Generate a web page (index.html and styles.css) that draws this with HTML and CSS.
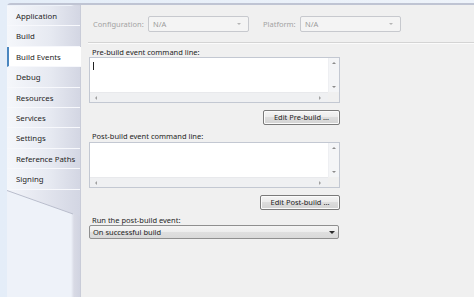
FILE: index.html
```html
<!DOCTYPE html>
<html lang="en">
<head>
    <meta charset="UTF-8">
    <title>Build Events</title>
    <link rel="stylesheet" href="styles.css">
</head>
<body>
    <div class="frame">
        <!-- Sol sekmeler -->
        <div class="sidebar">
            <div class="tab">Application</div>
            <div class="tab">Build</div>
            <div class="tab active">Build Events</div>
            <div class="tab">Debug</div>
            <div class="tab">Resources</div>
            <div class="tab">Services</div>
            <div class="tab">Settings</div>
            <div class="tab">Reference Paths</div>
            <div class="tab">Signing</div>
            <svg class="tail" width="73" height="26" viewBox="0 0 73 26">
                <defs>
                    <linearGradient id="tg" x1="0" x2="1" y1="0" y2="0">
                        <stop offset="0" stop-color="#f3f5fa"/>
                        <stop offset="1" stop-color="#d3d6e3"/>
                    </linearGradient>
                </defs>
                <polygon points="0,0 73,0 73,26 66,24" fill="url(#tg)"/>
                <line x1="0" y1="0.5" x2="66" y2="24" stroke="#b9bdcc" stroke-width="1"/>
            </svg>
        </div>

        <!-- Sayfa içeriği -->
        <div class="page">
            <div class="config-row">
                <span class="muted config-label">Configuration:</span>
                <div class="combo disabled">N/A<span class="arrow"></span></div>
                <span class="muted platform-label">Platform:</span>
                <div class="combo disabled">N/A<span class="arrow"></span></div>
            </div>
            <div class="sep"></div>

            <div class="section">
                <div class="label first">Pre-build event command line:</div>
                <div class="textbox">
                    <div class="text"><span class="caret"></span></div>
                    <div class="vscroll"><span class="up"></span><span class="down"></span></div>
                    <div class="hscroll"><span class="left"></span><span class="right"></span></div>
                    <div class="corner"></div>
                </div>
                <div class="btn-row"><div class="btn pre">Edit Pre-build ...</div></div>

                <div class="label">Post-build event command line:</div>
                <div class="textbox post">
                    <div class="text"></div>
                    <div class="vscroll"><span class="up"></span><span class="down"></span></div>
                    <div class="hscroll"><span class="left"></span><span class="right"></span></div>
                    <div class="corner"></div>
                </div>
                <div class="btn-row"><div class="btn post-btn">Edit Post-build ...</div></div>

                <div class="label run">Run the post-build event:</div>
                <div class="combo select">On successful build<span class="arrow dark"></span></div>
            </div>
        </div>
    </div>
</body>
</html>
```

FILE: styles.css
```css
* {
    margin: 0;
    padding: 0;
    box-sizing: border-box;
}

body {
    width: 474px;
    height: 297px;
    overflow: hidden;
    background: linear-gradient(to right, #e4edf8, #eef3fa);
    font-family: 'Noto Sans', 'Open Sans', sans-serif;
    font-size: 7.5px;
    color: #1e1e1e;
}

.frame {
    display: flex;
    margin: 3px 0 0 7px;
    height: 294px;
    border-top: 2px solid #bfc4d3;
    border-top-left-radius: 4px;
}

/* Sekmeler */
.sidebar {
    width: 73px;
    display: flex;
    flex-direction: column;
    padding-top: 1px;
    background: linear-gradient(to right, #eef2f9 0, #eef2f9 64px, #d8dae5 67px, #d1d4e1 73px);
}

.tab {
    height: 20.4px;
    line-height: 20px;
    padding-left: 9px;
    font-size: 7.8px;
    background: linear-gradient(to right, #f5f7fb, #e6e9f1 60%, #d3d6e3);
    border-bottom: 1px solid #f7f8fc;
    white-space: nowrap;
}

.tab.active {
    background: #ffffff;
    border-left: 2px solid #4a86bf;
    padding-left: 7px;
    margin-right: -1px;
    position: relative;
}

.tail {
    display: block;
}

/* İçerik */
.page {
    flex: 1;
    background: #f0f0f0;
    border-left: 1px solid #c9ccd8;
}

.config-row {
    display: flex;
    align-items: center;
    height: 37px;
    padding-left: 12px;
}

.muted {
    color: #a3a3a3;
}

.config-label {
    width: 55px;
}

.platform-label {
    width: 37px;
    margin-left: 14px;
}

.combo {
    position: relative;
    width: 101px;
    height: 16px;
    line-height: 14px;
    padding-left: 4px;
    border: 1px solid #c7c9ce;
    border-radius: 2px;
    background: #f4f4f4;
}

.combo.disabled {
    color: #9b9b9b;
}

.arrow {
    position: absolute;
    right: 7px;
    top: 6px;
    border-left: 2px solid transparent;
    border-right: 2px solid transparent;
    border-top: 2px solid #b5b5b5;
}

.arrow.dark {
    border-left-width: 3px;
    border-right-width: 3px;
    border-top: 3px solid #2a2a2a;
    right: 3px;
    top: 5px;
}

.sep {
    margin-left: 7px;
    border-top: 1px solid #d4d4d4;
    border-bottom: 1px solid #fbfbfb;
}

.section {
    padding-left: 8px;
    width: 260px;
}

.label {
    height: 10px;
    line-height: 10px;
    margin-top: 6px;
    padding-left: 3px;
    white-space: nowrap;
}

.label.first {
    margin-top: 3px;
}

.label.run {
    margin-top: 5px;
}

.textbox {
    display: grid;
    grid-template-columns: 1fr 11px;
    grid-template-rows: 1fr 10px;
    width: 251px;
    height: 46px;
    border: 1px solid #c3c8d2;
    background: #ffffff;
}

.textbox.post {
    margin-top: 1px;
}

.text {
    position: relative;
}

.caret {
    position: absolute;
    left: 3px;
    top: 4px;
    width: 1px;
    height: 8px;
    background: #222;
}

.vscroll {
    display: flex;
    flex-direction: column;
    justify-content: space-between;
    align-items: center;
    padding: 4px 0;
    background: #f4f5f7;
    border-left: 1px solid #eeeff2;
}

.hscroll {
    display: flex;
    justify-content: space-between;
    align-items: center;
    padding: 0 7px 0 5px;
    background: #eff0f2;
    border-top: 1px solid #e8e9ec;
}

.corner {
    background: #f0f0f0;
}

.up, .down {
    border-left: 2px solid transparent;
    border-right: 2px solid transparent;
}

.up {
    border-bottom: 2px solid #8c8c8c;
}

.down {
    border-top: 2px solid #8c8c8c;
}

.left, .right {
    border-top: 2px solid transparent;
    border-bottom: 2px solid transparent;
}

.left {
    border-right: 2px solid #a0a0a0;
}

.right {
    border-left: 2px solid #a0a0a0;
}

.btn-row {
    display: flex;
    justify-content: flex-end;
    width: 251px;
    margin-top: 7px;
}

.btn {
    height: 15px;
    line-height: 13px;
    text-align: center;
    border: 1px solid #7a7a7a;
    border-radius: 2px;
    background: linear-gradient(#f4f4f4, #ebebeb 50%, #dddddd 50%, #d3d3d3);
    box-shadow: inset 0 0 0 1px #fbfbfb;
}

.btn.pre {
    width: 77px;
}

.btn.post-btn {
    width: 80px;
}

.combo.select {
    width: 250px;
    height: 14px;
    line-height: 12px;
    padding-left: 3px;
    border: 1px solid #8f8f8f;
    background: linear-gradient(#f5f5f5, #ececec 50%, #dfdfdf 50%, #d9d9d9);
}
```
